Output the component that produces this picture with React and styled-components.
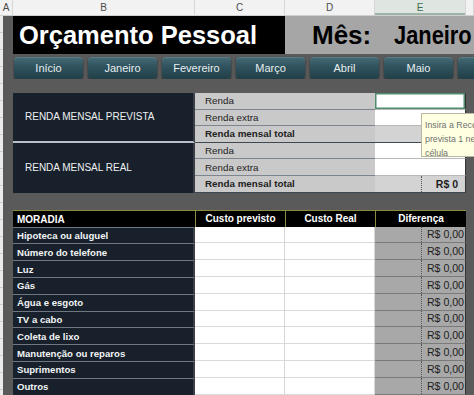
import React from 'react';
import styled, { createGlobalStyle } from 'styled-components';

const GlobalStyle = createGlobalStyle`
  html, body {
    margin: 0;
    padding: 0;
    overflow: hidden;
  }
  body {
    font-family: "Liberation Sans", Arial, sans-serif;
  }
`;

const months = ['Início', 'Janeiro', 'Fevereiro', 'Março', 'Abril', 'Maio', 'Junho'];

const housing = [
  'Hipoteca ou aluguel',
  'Número do telefone',
  'Luz',
  'Gás',
  'Água e esgoto',
  'TV a cabo',
  'Coleta de lixo',
  'Manutenção ou reparos',
  'Suprimentos',
  'Outros',
];

const incomeGroups = [
  { title: 'RENDA MENSAL PREVISTA', divider: true, selected: true },
  { title: 'RENDA MENSAL REAL', divider: false, selected: false },
];

export default function App() {
  return (
    <Page>
      <GlobalStyle />
      <ColumnHeaders>
        <ColHead>A</ColHead>
        <ColHead>B</ColHead>
        <ColHead>C</ColHead>
        <ColHead>D</ColHead>
        <ColHead $active>E</ColHead>
        <ColHead />
      </ColumnHeaders>

      <Body>
        <RowHeads />
        <Sheet>
          <TitleRow>
            <TitleCell>Orçamento Pessoal</TitleCell>
            <MonthCell>
              <span>Mês:</span>
              <MonthName>Janeiro</MonthName>
            </MonthCell>
          </TitleRow>

          <ButtonBar>
            {months.map((m) => (
              <NavButton key={m}>{m}</NavButton>
            ))}
          </ButtonBar>

          <Income>
            {incomeGroups.map((g) => (
              <IncomeGroup key={g.title}>
                <GroupTitle $divider={g.divider}>{g.title}</GroupTitle>
                <LabelCell>Renda</LabelCell>
                <InputCell $selected={g.selected} />
                <LabelCell>Renda extra</LabelCell>
                <InputCell />
                <LabelCell $bold $last>Renda mensal total</LabelCell>
                <SplitCell $light $last>
                  <span />
                  <Amount $bold>{g.selected ? '' : 'R$ 0'}</Amount>
                </SplitCell>
              </IncomeGroup>
            ))}
            <Tooltip>
              Insira a Receita
              <br />
              prevista 1 nesta
              <br />
              célula
            </Tooltip>
          </Income>

          <Expenses>
            <HeadCell $first $align="left">MORADIA</HeadCell>
            <HeadCell>Custo previsto</HeadCell>
            <HeadCell>Custo Real</HeadCell>
            <HeadCell>Diferença</HeadCell>
            {housing.map((item) => (
              <React.Fragment key={item}>
                <ItemCell>{item}</ItemCell>
                <BlankCell />
                <BlankCell />
                <SplitCell>
                  <span />
                  <Amount>R$ 0,00</Amount>
                </SplitCell>
              </React.Fragment>
            ))}
          </Expenses>
        </Sheet>
      </Body>
    </Page>
  );
}

const Page = styled.div`
  width: 474px;
  height: 395px;
  overflow: hidden;
  background: #5a5a5a;
  display: flex;
  flex-direction: column;
`;

const ColumnHeaders = styled.div`
  display: grid;
  grid-template-columns: 13px 182px 90px 90px 91px 1fr;
  height: 16px;
  background: #f2f2f2;
  border-bottom: 1px solid #cfcfcf;
  box-sizing: border-box;
  flex-shrink: 0;
`;

const ColHead = styled.div`
  font-size: 10px;
  line-height: 15px;
  text-align: center;
  color: ${(p) => (p.$active ? '#3a6b4f' : '#4a4a4a')};
  background: ${(p) => (p.$active ? '#dfe5e0' : 'transparent')};
  border-right: 1px solid #d6d6d6;
  box-shadow: ${(p) => (p.$active ? 'inset 0 -2px 0 #9fb3a6' : 'none')};
`;

const Body = styled.div`
  flex: 1;
  display: flex;
  min-height: 0;
`;

const RowHeads = styled.div`
  width: 3px;
  flex-shrink: 0;
  background: repeating-linear-gradient(
    to bottom,
    #e9ece9 0,
    #e9ece9 16px,
    #c9cfc9 16px,
    #c9cfc9 17px
  );
`;

const Sheet = styled.div`
  flex: 1;
  padding-left: 10px;
  display: flex;
  flex-direction: column;
  position: relative;
  min-width: 0;
`;

const TitleRow = styled.div`
  display: grid;
  grid-template-columns: 272px 1fr;
  height: 38px;
  flex-shrink: 0;
`;

const TitleCell = styled.div`
  background: #000;
  color: #fff;
  font-weight: bold;
  font-size: 25.5px;
  line-height: 38px;
  padding-left: 6px;
  white-space: nowrap;
`;

const MonthCell = styled.div`
  background: #a6a6a6;
  color: #000;
  font-weight: bold;
  font-size: 26px;
  display: flex;
  align-items: center;
  gap: 23px;
  padding-left: 27px;
  white-space: nowrap;
`;

const MonthName = styled.span`
  display: inline-block;
  transform: scaleX(0.84);
  transform-origin: left center;
`;

const ButtonBar = styled.div`
  display: flex;
  gap: 5px;
  padding: 3px 0 0 1px;
  height: 22px;
  margin-bottom: 14px;
  flex-shrink: 0;
  overflow: hidden;
`;

const NavButton = styled.div`
  flex: 0 0 69px;
  height: 22px;
  border-radius: 4px;
  background: linear-gradient(to bottom, #456b77 0%, #2f525d 45%, #223f48 100%);
  box-shadow: 0 1px 2px rgba(0, 0, 0, 0.7), inset 0 1px 0 rgba(255, 255, 255, 0.12);
  color: #e6eef0;
  font-size: 11px;
  line-height: 22px;
  text-align: center;
`;

const Income = styled.div`
  position: relative;
  width: 453px;
  flex-shrink: 0;
  margin-bottom: 17px;
`;

const IncomeGroup = styled.div`
  display: grid;
  grid-template-columns: 182px 180px 91px;
  grid-template-rows: repeat(3, 16.6px);
`;

const GroupTitle = styled.div`
  grid-row: 1 / 4;
  background: #18212b;
  color: #eef0f2;
  font-size: 10px;
  display: flex;
  align-items: center;
  padding-left: 12px;
  border-right: 2px solid #3a3f45;
  border-bottom: ${(p) => (p.$divider ? '2px solid #b9c0c7' : 'none')};
  box-sizing: border-box;
`;

const LabelCell = styled.div`
  background: #c9c9c9;
  color: #222;
  font-size: 9.8px;
  font-weight: ${(p) => (p.$bold ? 'bold' : 'normal')};
  padding-left: 10px;
  display: flex;
  align-items: center;
  border-bottom: 1px solid ${(p) => (p.$last ? '#3f4750' : '#7c8590')};
  box-sizing: border-box;
`;

const InputCell = styled.div`
  background: #fff;
  border-bottom: 1px solid #b8b8b8;
  border-right: 1px solid #333;
  box-sizing: border-box;
  box-shadow: ${(p) => (p.$selected ? 'inset 0 0 0 1.5px #4f8d6c' : 'none')};
`;

const SplitCell = styled.div`
  display: grid;
  grid-template-columns: 46px 45px;
  background: ${(p) => (p.$light ? '#d3d3d3' : '#a8a8a8')};
  border-bottom: 1px solid ${(p) => (p.$light ? '#3f4750' : '#7a7a7a')};
  border-right: 1px solid #333;
  box-sizing: border-box;
`;

const Amount = styled.span`
  border-left: 1px dotted #555;
  color: #1e1e1e;
  font-size: ${(p) => (p.$bold ? '10.5px' : '10.6px')};
  font-weight: ${(p) => (p.$bold ? 'bold' : 'normal')};
  padding-right: ${(p) => (p.$bold ? '8px' : '2px')};
  display: flex;
  align-items: center;
  justify-content: flex-end;
  white-space: nowrap;
`;

const Tooltip = styled.div`
  position: absolute;
  left: 408px;
  top: 20px;
  width: 80px;
  height: 44px;
  box-sizing: border-box;
  padding: 4px 0 0 3px;
  background: #ffffe1;
  border: 1px solid #b9b9a0;
  color: #707070;
  font-family: "Liberation Sans", Arial, sans-serif;
  font-size: 8.8px;
  line-height: 14px;
  white-space: nowrap;
  overflow: hidden;
`;

const Expenses = styled.div`
  display: grid;
  grid-template-columns: 182px 90px 90px 91px;
  grid-template-rows: 17px;
  grid-auto-rows: 16.8px;
  width: 453px;
  flex-shrink: 0;
`;

const HeadCell = styled.div`
  background: #000;
  color: #fff;
  font-weight: bold;
  font-size: 10px;
  border-top: 1px solid #8c8a3c;
  border-left: ${(p) => (p.$first ? 'none' : '1px solid #8c8a3c')};
  box-sizing: border-box;
  display: flex;
  align-items: center;
  justify-content: ${(p) => (p.$align === 'left' ? 'flex-start' : 'center')};
  padding: ${(p) => (p.$align === 'left' ? '2px 0 0 4px' : '0')};
`;

const ItemCell = styled.div`
  background: #18212b;
  color: #f2f4f6;
  font-weight: bold;
  font-size: 9.6px;
  padding-left: 4px;
  display: flex;
  align-items: center;
  border-top: 1px solid #6f7882;
  border-right: 2px solid #3a3f45;
  box-sizing: border-box;
  white-space: nowrap;
`;

const BlankCell = styled.div`
  background: #fff;
  border-bottom: 1px solid #dadada;
  border-right: 1px solid #d6d6d6;
  box-sizing: border-box;
`;
